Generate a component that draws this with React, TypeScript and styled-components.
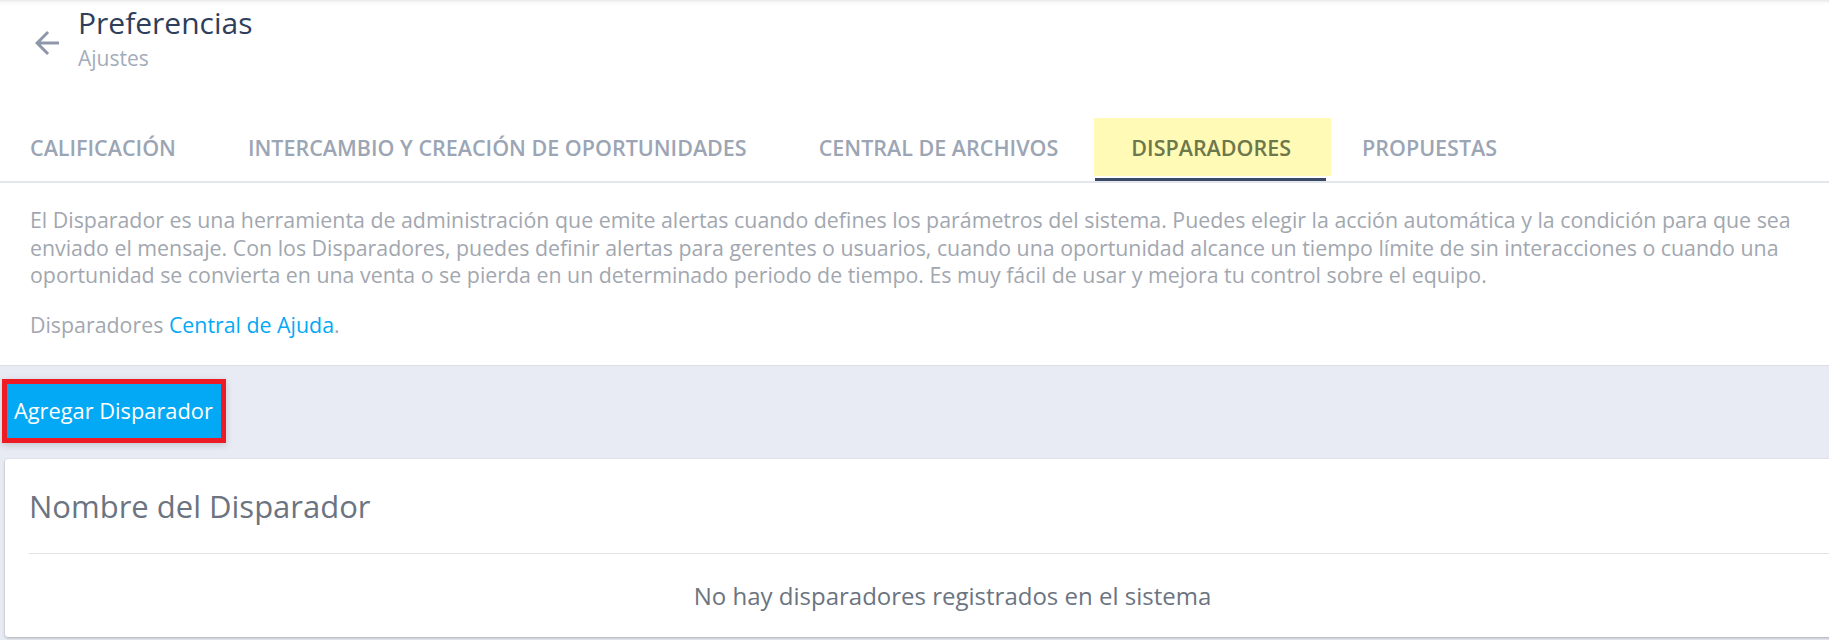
import React from "react";
import styled, { createGlobalStyle } from "styled-components";

const GlobalStyle = createGlobalStyle`
  html, body { margin: 0; padding: 0; background: #ffffff; overflow: hidden; }
  body { font-family: "Open Sans", "Noto Sans", sans-serif; }
  * { box-sizing: border-box; }
`;

const Page = styled.div`
  display: flex;
  flex-direction: column;
  width: 100%;
  min-height: 640px;
  background: #ffffff;
  box-shadow: inset 0 5px 5px -5px rgba(0, 0, 0, 0.18);
`;

const Header = styled.header`
  display: flex;
  align-items: flex-start;
  gap: 13px;
  padding: 3px 0 0 29px;
`;

const BackButton = styled.button`
  display: flex;
  align-items: center;
  justify-content: center;
  width: 36px;
  height: 36px;
  margin-top: 22px;
  padding: 0;
  border: none;
  background: transparent;
  color: #8e98aa;
  cursor: pointer;
`;

const TitleBlock = styled.div`
  display: flex;
  flex-direction: column;
  gap: 1px;
`;

const Title = styled.h1`
  margin: 0;
  font-size: 30px;
  line-height: 40px;
  font-weight: 400;
  color: #2f3e5a;
`;

const Subtitle = styled.div`
  font-size: 21px;
  line-height: 28px;
  color: #a4acba;
`;

const TabList = styled.nav`
  display: flex;
  margin-top: 46px;
  padding-left: 30px;
  border-bottom: 2px solid #e3e7ed;
`;

const Tab = styled.div`
  display: flex;
  flex-direction: column;
  &:first-child > span { padding-left: 0; }
`;

const TabLabel = styled.span<{ $active?: boolean }>`
  display: flex;
  align-items: center;
  height: 58px;
  padding: ${(p) => (p.$active ? "0 40px 0 37px" : "0 36px")};
  margin-right: ${(p) => (p.$active ? "-5px" : "0")};
  font-size: 21.5px;
  font-weight: 600;
  text-transform: uppercase;
  white-space: nowrap;
  color: ${(p) => (p.$active ? "#6c774c" : "#9ba5b4")};
  background: ${(p) => (p.$active ? "#fffab5" : "transparent")};
`;

const TabIndicator = styled.div<{ $active?: boolean }>`
  height: 3px;
  margin: 2px 0 0 1px;
  background: ${(p) => (p.$active ? "#3a4a66" : "transparent")};
`;

const Description = styled.section`
  padding: 23px 24px 27px 30px;
  font-size: 21.35px;
  line-height: 27.5px;
  color: #a2a7af;
`;

const Paragraph = styled.p`
  margin: 0;
  & + & { margin-top: 22px; }
`;

const Link = styled.a`
  color: #03a9f4;
  text-decoration: none;
`;

const Band = styled.section`
  display: flex;
  flex-direction: column;
  flex: 1;
  background: #e8ebf3;
  border-top: 1px solid #dcdfe4;
  overflow: hidden;
`;

const ButtonRow = styled.div`
  display: flex;
  padding: 13px 0 16px 2px;
`;

const AddButton = styled.button`
  height: 64px;
  padding: 0 8px 0 7px;
  border: 5px solid #ed1c24;
  background: #03a9f4;
  color: #ffffff;
  font-family: "Open Sans", "Noto Sans", sans-serif;
  font-size: 21.8px;
  line-height: 54px;
  box-shadow: 0 2px 7px rgba(0, 0, 0, 0.16);
  cursor: pointer;
`;

const Card = styled.div`
  margin: 0 -71px 0 5px;
  background: #ffffff;
  border-radius: 3px;
  box-shadow: 0 1px 3px rgba(0, 0, 0, 0.28);
  padding: 0 24px;
`;

const CardHeader = styled.h2`
  margin: 0;
  padding: 28px 0;
  font-size: 31px;
  line-height: 38px;
  font-weight: 400;
  color: #6b7480;
  border-bottom: 1px solid #e2e2e2;
`;

const EmptyRow = styled.div`
  display: flex;
  justify-content: center;
  align-items: center;
  height: 83px;
  font-size: 24px;
  color: #6b7480;
`;

const ArrowBack = () => (
  <svg width="36" height="36" viewBox="0 0 24 24" fill="currentColor" aria-hidden="true">
    <path d="M20 11H7.83l5.59-5.59L12 4l-8 8 8 8 1.41-1.41L7.83 13H20v-2z" />
  </svg>
);

const tabs = [
  "Calificación",
  "Intercambio y creación de oportunidades",
  "Central de archivos",
  "Disparadores",
  "Propuestas",
];

export default function App() {
  return (
    <>
      <GlobalStyle />
      <Page>
        <Header>
          <BackButton aria-label="Volver">
            <ArrowBack />
          </BackButton>
          <TitleBlock>
            <Title>Preferencias</Title>
            <Subtitle>Ajustes</Subtitle>
          </TitleBlock>
        </Header>

        <TabList>
          {tabs.map((t) => {
            const active = t === "Disparadores";
            return (
              <Tab key={t}>
                <TabLabel $active={active}>{t}</TabLabel>
                <TabIndicator $active={active} />
              </Tab>
            );
          })}
        </TabList>

        <Description>
          <Paragraph>
            El Disparador es una herramienta de administración que emite alertas cuando defines los
            parámetros del sistema. Puedes elegir la acción automática y la condición para que sea
            enviado el mensaje. Con los Disparadores, puedes definir alertas para gerentes o usuarios,
            cuando una oportunidad alcance un tiempo límite de sin interacciones o cuando una
            oportunidad se convierta en una venta o se pierda en un determinado periodo de tiempo. Es
            muy fácil de usar y mejora tu control sobre el equipo.
          </Paragraph>
          <Paragraph>
            Disparadores <Link href="#">Central de Ajuda</Link>.
          </Paragraph>
        </Description>

        <Band>
          <ButtonRow>
            <AddButton>Agregar Disparador</AddButton>
          </ButtonRow>
          <Card>
            <CardHeader>Nombre del Disparador</CardHeader>
            <EmptyRow>No hay disparadores registrados en el sistema</EmptyRow>
          </Card>
        </Band>
      </Page>
    </>
  );
}
